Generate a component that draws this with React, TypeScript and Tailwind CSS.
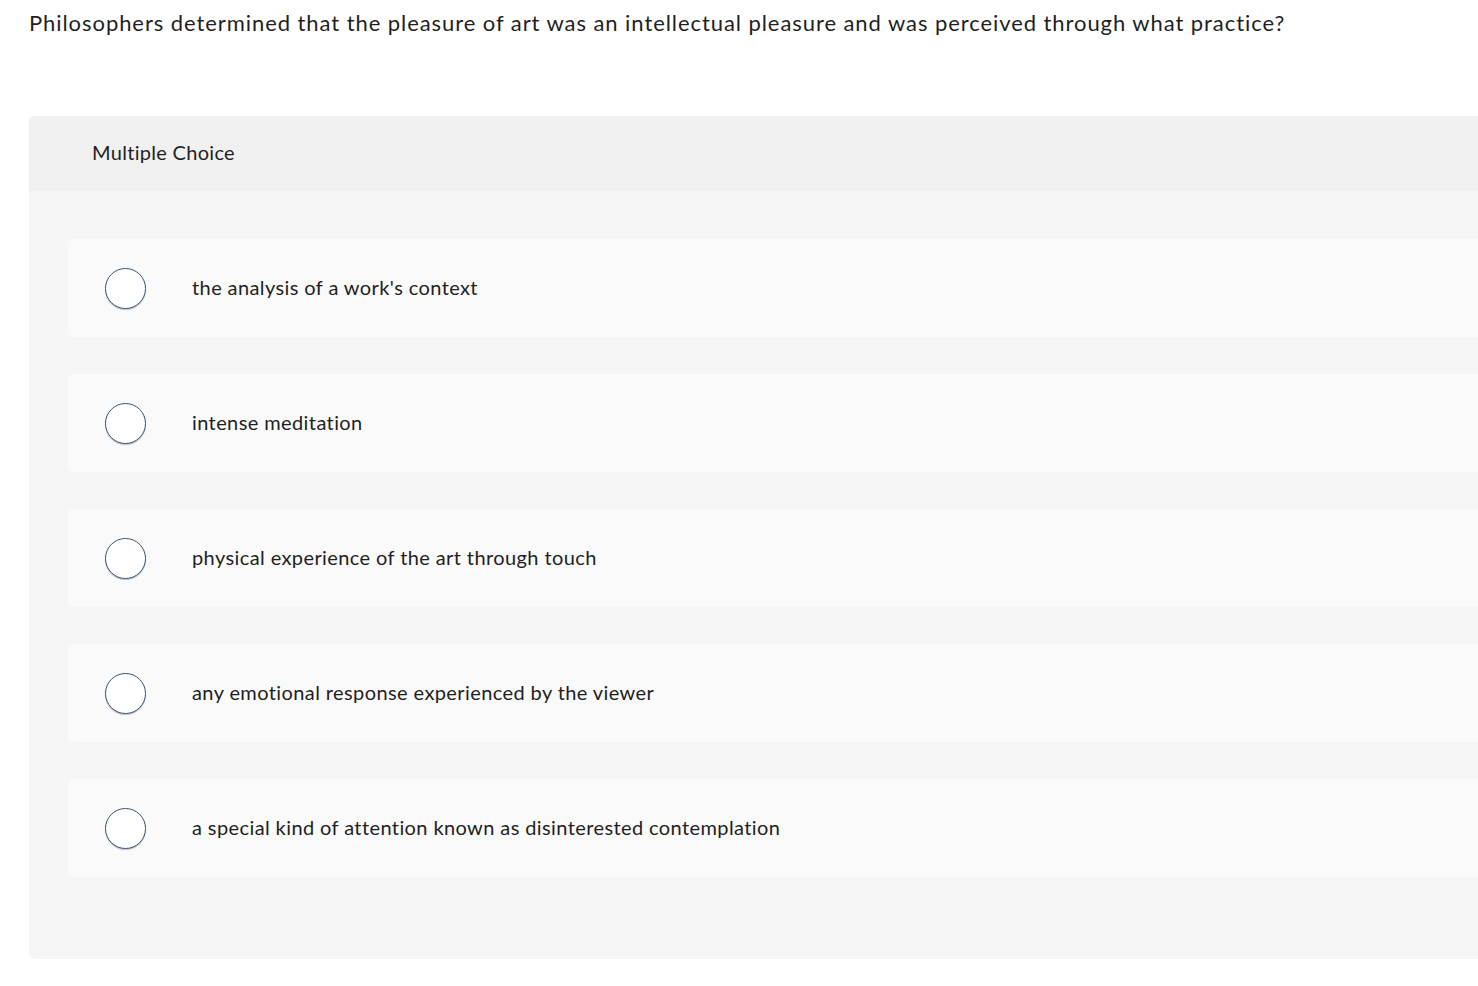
import React from "react";

const options = [
  "the analysis of a work's context",
  "intense meditation",
  "physical experience of the art through touch",
  "any emotional response experienced by the viewer",
  "a special kind of attention known as disinterested contemplation",
];

export default function App() {
  return (
    <div className="w-full min-h-[986px] overflow-hidden bg-white text-[#1f1f1f]" style={{ fontFamily: "Lato, 'Open Sans', sans-serif" }}>
      <div className="pl-[29px] pt-[9px] text-[22px] leading-[28px] tracking-[0.93px]">
        Philosophers determined that the pleasure of art was an intellectual pleasure and was perceived through what practice?
      </div>
      <div className="ml-[29px] mt-[79px] w-[1500px] rounded-[6px] bg-[#f5f5f5]">
        <div className="flex h-[75px] items-center rounded-t-[6px] bg-[#f0f0f0] pb-[3px] pl-[63px] text-[20px] tracking-[0.3px]">
          Multiple Choice
        </div>
        <div className="flex flex-col gap-[37px] pl-[39px] pr-[10px] pt-[48px] pb-[82px]">
          {options.map((o) => (
            <div key={o} className="flex h-[98px] items-center rounded-[5px] bg-[#fafafa] pl-[37px]">
              <div className="h-[41px] w-[41px] shrink-0 rounded-full border-[1.5px] border-[#3d5576] bg-white shadow-[0_1px_1px_rgba(0,0,0,0.25)]" />
              <div className="ml-[46px] pb-[2px] text-[20px] tracking-[0.02em]">{o}</div>
            </div>
          ))}
        </div>
      </div>
    </div>
  );
}
